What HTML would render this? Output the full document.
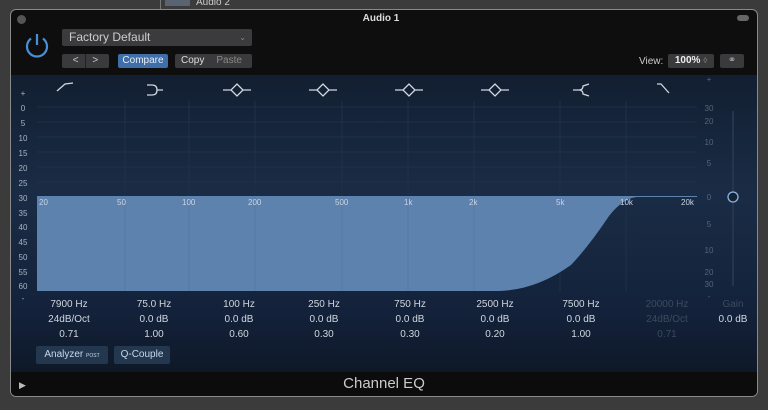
<!DOCTYPE html>
<html><head><meta charset="utf-8"><style>
*{margin:0;padding:0;box-sizing:border-box}
body{width:768px;height:410px;background:#3b3b3c;position:relative;overflow:hidden;font-family:"Liberation Sans",sans-serif}
.abs{position:absolute}
#win{position:absolute;left:10px;top:9px;width:748px;height:388px;background:#0e0e0f;border:1px solid #8a8a8a;border-radius:6px;overflow:hidden}
.t{position:absolute;white-space:nowrap}
.btn{position:absolute;background:#3a3a3c;border-radius:2px;color:#ddd;font-size:10px;text-align:center;line-height:14px}
.col{position:absolute;width:80px;text-align:center;font-size:10px;color:#cfd6de;line-height:15px}
</style></head><body>
<div class="abs" style="left:160px;top:0;width:1px;height:9px;background:#777"></div>
<div class="abs" style="left:165px;top:0;width:25px;height:6px;background:#5a6470"></div>
<div class="t" style="left:196px;top:-3px;font-size:10px;color:#ccc">Audio 2</div>
<div id="win">
 <div class="abs" style="left:6px;top:5px;width:9px;height:9px;border-radius:50%;background:#555"></div>
 <div class="t" style="left:0;width:740px;top:3px;text-align:center;font-size:10px;color:#ddd;font-weight:bold">Audio 1</div>
 <div class="abs" style="left:726px;top:5px;width:12px;height:6px;border-radius:3px;background:#666"></div>
 <svg class="abs" style="left:12px;top:22px" width="28" height="28" viewBox="0 0 28 28"><path d="M8 6.5A10 10 0 1 0 20 6.5" fill="none" stroke="#4a90d8" stroke-width="2.2"/><line x1="14" y1="2" x2="14" y2="13" stroke="#4a90d8" stroke-width="2.2"/></svg>
 <div class="btn" style="left:51px;top:19px;width:190px;height:17px;text-align:left;padding-left:7px;font-size:12px;line-height:17px;color:#ccc;background:#3b3b3d">Factory Default<span style="position:absolute;right:6px;font-size:8px;color:#888">⌄</span></div>
 <div class="btn" style="left:51px;top:44px;width:47px;height:14px;color:#ccc">&lt;&nbsp;&nbsp;&nbsp;&nbsp;&nbsp;&gt;</div>
 <div class="abs" style="left:74px;top:44px;width:1px;height:14px;background:#222"></div>
 <div class="btn" style="left:107px;top:44px;width:50px;height:14px;background:#3f6ea8;color:#e8eef6">Compare</div>
 <div class="btn" style="left:164px;top:44px;width:77px;height:14px;text-align:left;padding-left:6px">Copy<span style="color:#888;margin-left:12px">Paste</span></div>
 <div class="t" style="left:628px;top:46px;font-size:10px;color:#ccc">View:</div>
 <div class="btn" style="left:657px;top:44px;width:46px;height:14px;font-weight:bold;color:#eee">100% <span style="color:#777;font-size:8px">◊</span></div>
 <div class="btn" style="left:709px;top:44px;width:24px;height:14px;color:#aaa">⚭</div>
 <div class="abs" style="left:0;top:65px;width:746px;height:297px;background:linear-gradient(180deg,#121f31 0%,#1a2c45 40%,#13223a 80%,#0e1828 100%)"></div>
 <svg class="abs" style="left:0;top:56px" width="746" height="306">
  <g stroke="#d0d8e0" stroke-width="1.3" fill="none">
   <path d="M46 25 L54 18 L62 17"/>
   <path d="M136 19 L141 19 Q146 19 146 24 M136 29 L141 29 Q146 29 146 24 M146 24 L152 24"/>
   <path d="M212 24 H220 M232 24 H240 M220 24 L226 18 L232 24 L226 30 Z"/>
   <path d="M298 24 H306 M318 24 H326 M306 24 L312 18 L318 24 L312 30 Z"/>
   <path d="M384 24 H392 M404 24 H412 M392 24 L398 18 L404 24 L398 30 Z"/>
   <path d="M470 24 H478 M490 24 H498 M478 24 L484 18 L490 24 L484 30 Z"/>
   <path d="M562 24 H568 Q572 24 572 20 L578 18 M568 24 Q572 24 572 28 L578 30"/>
   <path d="M646 18 L650 18 L658 27"/>
  </g>
  <g stroke="#1f3049" stroke-width="1">
   <line x1="26" y1="41" x2="686" y2="41"/><line x1="26" y1="56" x2="686" y2="56"/><line x1="26" y1="71" x2="686" y2="71"/><line x1="26" y1="86" x2="686" y2="86"/><line x1="26" y1="101" x2="686" y2="101"/><line x1="26" y1="116" x2="686" y2="116"/>
   <line x1="114" y1="35" x2="114" y2="225"/><line x1="178" y1="35" x2="178" y2="225"/><line x1="244" y1="35" x2="244" y2="225"/><line x1="331" y1="35" x2="331" y2="225"/><line x1="397" y1="35" x2="397" y2="225"/><line x1="463" y1="35" x2="463" y2="225"/><line x1="549" y1="35" x2="549" y2="225"/><line x1="615" y1="35" x2="615" y2="225"/>
  </g>
  <path d="M26 130 L686 130 L686 131 L626 131 Q612 132 598 150 Q578 180 560 199 Q525 224 488 225 L26 225 Z" fill="#5e82ae"/>
  <g stroke="#5879a4" stroke-width="1"><line x1="114" y1="131" x2="114" y2="225"/><line x1="178" y1="131" x2="178" y2="225"/><line x1="244" y1="131" x2="244" y2="225"/><line x1="331" y1="131" x2="331" y2="225"/><line x1="397" y1="131" x2="397" y2="225"/><line x1="463" y1="131" x2="463" y2="225"/></g>
  <g font-family="Liberation Sans" font-size="8" fill="#c8d4e2">
   <text x="28" y="139">20</text><text x="106" y="139">50</text><text x="171" y="139">100</text><text x="237" y="139">200</text><text x="324" y="139">500</text><text x="393" y="139">1k</text><text x="458" y="139">2k</text><text x="545" y="139">5k</text><text x="609" y="139">10k</text><text x="670" y="139">20k</text>
  </g>
  <g font-family="Liberation Sans" font-size="8" fill="#a8b4c2" text-anchor="middle">
   <text x="12" y="30">+</text><text x="12" y="45">0</text><text x="12" y="60">5</text><text x="12" y="75">10</text><text x="12" y="90">15</text><text x="12" y="105">20</text><text x="12" y="120">25</text><text x="12" y="135">30</text><text x="12" y="150">35</text><text x="12" y="164">40</text><text x="12" y="179">45</text><text x="12" y="194">50</text><text x="12" y="209">55</text><text x="12" y="223">60</text><text x="12" y="235">-</text>
  </g>
  <g font-family="Liberation Sans" font-size="8" fill="#56647a" text-anchor="middle">
   <text x="698" y="16">+</text><text x="698" y="45">30</text><text x="698" y="58">20</text><text x="698" y="79">10</text><text x="698" y="100">5</text><text x="698" y="134">0</text><text x="698" y="161">5</text><text x="698" y="187">10</text><text x="698" y="209">20</text><text x="698" y="221">30</text><text x="698" y="233">-</text>
  </g>
  <line x1="722" y1="45" x2="722" y2="220" stroke="#26354c" stroke-width="2"/>
  <circle cx="722" cy="131" r="5" fill="#142235" stroke="#8fb4e0" stroke-width="1.3"/>
 </svg>
 <div class="col" style="left:18px;top:287px">7900 Hz<br>24dB/Oct<br>0.71</div>
 <div class="col" style="left:103px;top:287px">75.0 Hz<br>0.0 dB<br>1.00</div>
 <div class="col" style="left:188px;top:287px">100 Hz<br>0.0 dB<br>0.60</div>
 <div class="col" style="left:273px;top:287px">250 Hz<br>0.0 dB<br>0.30</div>
 <div class="col" style="left:359px;top:287px">750 Hz<br>0.0 dB<br>0.30</div>
 <div class="col" style="left:444px;top:287px">2500 Hz<br>0.0 dB<br>0.20</div>
 <div class="col" style="left:530px;top:287px">7500 Hz<br>0.0 dB<br>1.00</div>
 <div class="col" style="left:616px;top:287px;color:#3c4a5e">20000 Hz<br>24dB/Oct<br>0.71</div>
 <div class="col" style="left:682px;top:287px;width:80px;"><span style="color:#3c4a5e">Gain</span><br>0.0 dB</div>
 <div class="btn" style="left:25px;top:336px;width:72px;height:18px;line-height:18px;background:#23374f;color:#c8d8ea">Analyzer <span style="font-size:5px">POST</span></div>
 <div class="btn" style="left:103px;top:336px;width:56px;height:18px;line-height:18px;background:#23374f;color:#c8d8ea">Q-Couple</div>
 <div class="abs" style="left:0;top:362px;width:746px;height:26px;background:#0c0c0d"></div>
 <div class="t" style="left:0;width:746px;top:365px;text-align:center;font-size:15px;color:#ccc">Channel EQ</div>
 <div class="t" style="left:8px;top:370px;font-size:9px;color:#bbb">▶</div>
</div>
</body></html>
